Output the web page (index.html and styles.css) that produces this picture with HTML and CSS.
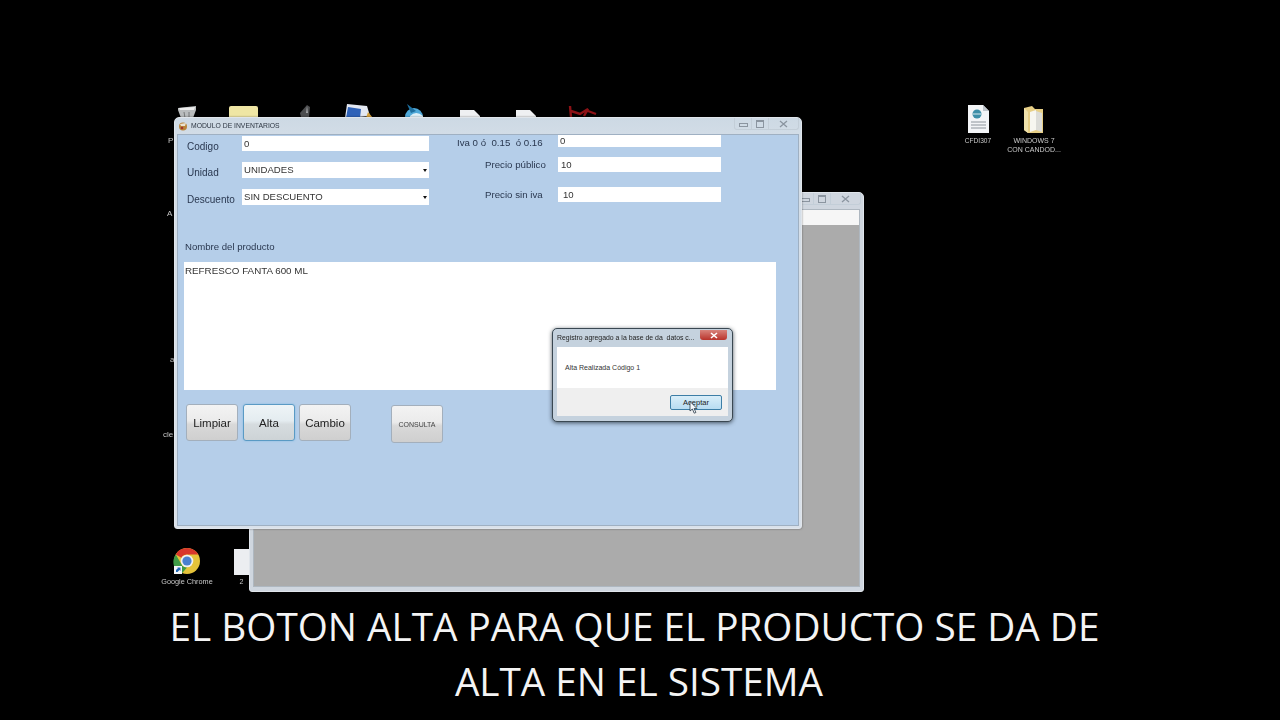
FILE: index.html
```html
<!DOCTYPE html>
<html lang="es">
<head>
    <meta charset="UTF-8">
    <meta name="viewport" content="width=device-width, initial-scale=1.0">
    <title>Modulo de inventarios</title>
    <link rel="stylesheet" href="styles.css">
</head>
<body>
    <div class="desktop">
        <!-- iconos del escritorio, casi todos tapados por las ventanas -->
        <svg class="peek peek-bin" viewBox="0 0 22 13"><path d="M2 3 L20 1 L20 5 L17 13 L5 13 L2 5 Z" fill="#b9bcbd"/><path d="M3 3 L19 2 L18 5 L4 5 Z" fill="#eceded"/><path d="M8 7 L9 13 M13 7 L13 13" stroke="#77797a"/></svg>
        <div class="peek peek-note"></div>
        <svg class="peek peek-dark" viewBox="0 0 14 12"><path d="M9 0 L12 2 L11 12 L3 12 L2 8 Z" fill="#4c4d4f"/><path d="M9 1 L10 8 L8 8 Z" fill="#a3a5a7"/></svg>
        <svg class="peek peek-book" viewBox="0 0 30 14"><path d="M4 0 L24 2 L27 12 L2 14 Z" fill="#e3e8f2"/><path d="M5 3 L18 5 L17 14 L3 14 Z" fill="#2f62b8"/><path d="M25 8 L30 14 L23 14 Z" fill="#d6a13c"/></svg>
        <svg class="peek peek-ball" viewBox="0 0 22 14"><circle cx="12" cy="13" r="9" fill="#4fa8d8"/><path d="M5 0 L14 7 L9 9 Z" fill="#1e6f9f"/><path d="M8 12 Q14 6 21 12 L21 14 L8 14 Z" fill="#dff0f8"/></svg>
        <svg class="peek peek-doc-a" viewBox="0 0 20 10"><path d="M0 2 L14 2 L20 8 L20 10 L0 10 Z" fill="#eff0f2"/></svg>
        <svg class="peek peek-doc-b" viewBox="0 0 20 10"><path d="M0 2 L14 2 L20 8 L20 10 L0 10 Z" fill="#eff0f2"/></svg>
        <svg class="peek peek-red" viewBox="0 0 30 14"><path d="M2 1 L3 12 M3 6 L12 9 L20 4 L16 11 M20 6 L28 9" stroke="#8d1115" stroke-width="2.4" fill="none"/></svg>

        <span class="cut-label label-p">P:</span>
        <span class="cut-label label-a">A</span>
        <span class="cut-label label-a2">a</span>
        <span class="cut-label label-cle">cle</span>

        <div class="icon icon-chrome">
            <svg class="icon-img" viewBox="0 0 28 28">
                <circle cx="14" cy="14" r="13" fill="#e5c33a"/>
                <path d="M14 1 A13 13 0 0 1 25.3 7.5 L14 7.5 A6.5 6.5 0 0 0 8.4 10.8 L2.8 7.4 A13 13 0 0 1 14 1 Z" fill="#d8372c"/>
                <path d="M2.8 7.4 L8.4 17.2 A6.5 6.5 0 0 0 14 20.5 L8.4 27 A13 13 0 0 1 2.8 7.4 Z" fill="#3f9b46"/>
                <circle cx="14" cy="14" r="6.3" fill="#f1f1f1"/>
                <circle cx="14" cy="14" r="4.6" fill="#4a80cf"/>
                <rect x="1" y="19" width="8" height="8" fill="#f4f6f8"/>
                <path d="M3 25 L3 23 L5 21 L4 20.5 L7.5 20.5 L7.5 24 L6.5 23 L4.5 25 Z" fill="#2168b5"/>
            </svg>
            <span class="icon-label">Google Chrome</span>
        </div>
        <div class="icon icon-two">
            <div class="blank-doc"></div>
            <span class="icon-label">2</span>
        </div>
        <div class="icon icon-cfdi">
            <svg class="icon-img" viewBox="0 0 22 28">
                <path d="M1 0 L16 0 L22 6 L22 28 L1 28 Z" fill="#f3f5f7"/>
                <path d="M16 0 L22 6 L16 6 Z" fill="#bfc6cc"/>
                <circle cx="10" cy="9" r="4.5" fill="#3d8fa8"/>
                <path d="M6 9 L14 9" stroke="#dcebf0"/>
                <path d="M4 17 H19 M4 20 H19 M4 23 H19" stroke="#8c949b"/>
            </svg>
            <span class="icon-label">CFDI307</span>
        </div>
        <div class="icon icon-folder">
            <svg class="icon-img" viewBox="0 0 22 28">
                <path d="M1 2 L9 0 L12 3 L20 3 L20 27 L5 27 L1 24 Z" fill="#e7cf86"/>
                <path d="M7 6 L13 4 L13 24 L7 26 Z" fill="#f7f6f0"/>
                <path d="M13 5 L19 7 L19 26 L13 24 Z" fill="#dcdcd8"/>
                <path d="M1 2 L5 6 L5 27 L1 24 Z" fill="#f0e2ab"/>
            </svg>
            <span class="icon-label">WINDOWS 7<br>CON CANDOD...</span>
        </div>

        <!-- ventana de atras -->
        <div class="win win-back">
            <div class="titlebar">
                <div class="controls">
                    <span class="ctl"><i class="ctl-min"></i></span>
                    <span class="ctl"><i class="ctl-max"></i></span>
                    <span class="ctl ctl-wide">
                        <svg class="ctl-x" viewBox="0 0 9 8"><path d="M1 1 L8 7 M8 1 L1 7" stroke="#8b95a0" stroke-width="1.3"/></svg>
                    </span>
                </div>
            </div>
            <div class="back-body">
                <div class="back-strip"></div>
                <div class="back-gray"></div>
            </div>
        </div>

        <!-- ventana principal -->
        <div class="win win-main">
            <div class="titlebar">
                <svg class="app-icon" viewBox="0 0 10 10"><circle cx="5" cy="5.5" r="4" fill="#b9853c"/><path d="M2 3 L8 2 L7 5 L3 5 Z" fill="#e9e3d2"/><circle cx="4" cy="7" r="1.3" fill="#a3342a"/></svg>
                <span class="win-title">MODULO DE INVENTARIOS</span>
                <div class="controls">
                    <span class="ctl"><i class="ctl-min"></i></span>
                    <span class="ctl"><i class="ctl-max"></i></span>
                    <span class="ctl ctl-wide">
                        <svg class="ctl-x" viewBox="0 0 9 8"><path d="M1 1 L8 7 M8 1 L1 7" stroke="#8b95a0" stroke-width="1.3"/></svg>
                    </span>
                </div>
            </div>
            <div class="main-body">
                <div class="form">
                    <div class="col-left">
                        <div class="row row-codigo">
                            <label class="lbl">Codigo</label>
                            <div class="field">0</div>
                        </div>
                        <div class="row">
                            <label class="lbl">Unidad</label>
                            <div class="field field-select">UNIDADES<i class="arrow"></i></div>
                        </div>
                        <div class="row">
                            <label class="lbl">Descuento</label>
                            <div class="field field-select">SIN DESCUENTO<i class="arrow"></i></div>
                        </div>
                    </div>
                    <div class="col-right">
                        <div class="price-row price-iva">
                            <label class="lbl-price">Iva 0 ó &nbsp;0.15 &nbsp;ó 0.16</label>
                            <div class="field field-iva">0</div>
                        </div>
                        <div class="price-row">
                            <label class="lbl-price lbl-indent">Precio público</label>
                            <div class="field field-price">10</div>
                        </div>
                        <div class="price-row">
                            <label class="lbl-price lbl-indent">Precio sin iva</label>
                            <div class="field field-price field-far">10</div>
                        </div>
                    </div>
                </div>
                <p class="nombre-lbl">Nombre del producto</p>
                <div class="nombre-box">REFRESCO FANTA 600 ML</div>
                <div class="buttons">
                    <button class="btn">Limpiar</button>
                    <button class="btn btn-focus">Alta</button>
                    <button class="btn btn-cambio">Cambio</button>
                    <button class="btn btn-small">CONSULTA</button>
                </div>
            </div>
        </div>

        <!-- mensaje -->
        <div class="dialog">
            <div class="dialog-title">
                <span class="dialog-text">Registro agregado a la base de da&nbsp; datos c...</span>
                <span class="dialog-close">
                    <svg class="dialog-x" viewBox="0 0 8 7"><path d="M1 1 L7 6 M7 1 L1 6" stroke="#fff" stroke-width="1.6"/></svg>
                </span>
            </div>
            <div class="dialog-msg">Alta Realizada Código 1</div>
            <div class="dialog-foot">
                <button class="dialog-btn">Aceptar</button>
            </div>
        </div>
        <svg class="cursor" viewBox="0 0 9 13"><path d="M1 0.5 L1 10 L3.4 8 L5.2 12.2 L6.9 11.5 L5.1 7.5 L8 7.5 Z" fill="#f4f8fb" stroke="#2b3a48" stroke-width=".8"/></svg>
    </div>

    <div class="caption">EL BOTON ALTA PARA QUE EL PRODUCTO SE DA DE<br><span class="caption-second">ALTA EN EL SISTEMA</span></div>
</body>
</html>
```

FILE: styles.css
```css
body {
    margin: 0;
    background-color: #000;
    font-family: "Liberation Sans", Arial, sans-serif;
    overflow: hidden;
}
.desktop {
    position: relative;
    width: 1280px;
    height: 599px;
    filter: blur(0.35px);
}
.caption {
    padding-right: 11px;
    font-family: "Open Sans", sans-serif;
    font-size: 38.7px;
    line-height: 54.5px;
    color: #f4f4f4;
    text-align: center;
}
.caption-second {
    padding-left: 9px;
}

/* iconos */
.peek {
    position: absolute;
}
.peek-bin { left: 176px; top: 105px; width: 22px; height: 13px; }
.peek-note { left: 229px; top: 106px; width: 29px; height: 12px; background-color: #efe6a4; border-radius: 2px 2px 0 0; }
.peek-dark { left: 298px; top: 105px; width: 14px; height: 12px; }
.peek-book { left: 343px; top: 104px; width: 30px; height: 14px; }
.peek-ball { left: 402px; top: 104px; width: 22px; height: 14px; }
.peek-doc-a { left: 460px; top: 108px; width: 20px; height: 10px; }
.peek-doc-b { left: 516px; top: 108px; width: 20px; height: 10px; }
.peek-red { left: 568px; top: 105px; width: 30px; height: 14px; }
.cut-label {
    position: absolute;
    font-size: 8px;
    line-height: 10px;
    color: #c4c4c4;
}
.label-p { left: 168px; top: 136px; }
.label-a { left: 167px; top: 209px; }
.label-a2 { left: 170px; top: 355px; }
.label-cle { left: 163px; top: 430px; }
.icon {
    position: absolute;
    display: flex;
    flex-direction: column;
    align-items: center;
    gap: 1px;
}
.icon-img {
    display: block;
}
.icon-label {
    font-size: 7px;
    line-height: 9px;
    color: #c9c9c9;
    text-align: center;
    white-space: nowrap;
}
.icon-chrome { left: 157px; top: 547px; width: 60px; gap: 2px; }
.icon-chrome .icon-img { width: 28px; height: 28px; }
.icon-chrome .icon-label { font-size: 7.3px; }
.icon-two { left: 234px; top: 549px; width: 15px; gap: 2px; }
.blank-doc { width: 15px; height: 26px; background-color: #eceef1; }
.icon-cfdi { left: 948px; top: 105px; width: 60px; gap: 3px; }
.icon-cfdi .icon-img { width: 22px; height: 28px; }
.icon-cfdi .icon-label { font-size: 6.6px; }
.icon-folder { left: 1004px; top: 106px; width: 60px; gap: 2px; }
.icon-folder .icon-img { width: 22px; height: 28px; }

/* ventanas */
.win {
    position: absolute;
    display: flex;
    flex-direction: column;
    box-sizing: border-box;
    background-color: #cfd6df;
    border: 1px solid #e0e5eb;
    border-radius: 5px 5px 3px 3px;
}
.win-back {
    left: 249px;
    top: 192px;
    width: 615px;
    height: 400px;
}
.win-main {
    left: 174px;
    top: 117px;
    width: 628px;
    height: 412px;
    background: linear-gradient(to bottom, #cdd9e4 0, #d3dde7 20px, #d9e1ea 100%);
    box-shadow: 0 0 2px rgba(0, 0, 0, 0.5);
}
.titlebar {
    display: flex;
    align-items: center;
    flex-shrink: 0;
    height: 16px;
    padding-left: 3px;
}
.app-icon {
    width: 10px;
    height: 10px;
    margin-right: 3px;
    margin-bottom: 1px;
}
.win-title {
    padding-bottom: 2px;
    font-size: 6.8px;
    color: #2b3440;
}
.controls {
    display: flex;
    height: 11px;
    margin-left: auto;
    margin-right: 2px;
    margin-top: -4px;
    border: 1px solid #c3ced8;
    border-top: none;
    border-radius: 0 0 3px 3px;
}
.ctl {
    display: flex;
    align-items: center;
    justify-content: center;
    width: 16px;
    border-right: 1px solid #c3ced8;
}
.ctl-wide {
    width: 29px;
    border-right: none;
}
.ctl-min {
    display: block;
    width: 7px;
    height: 2px;
    margin-top: 3px;
    border: 1px solid #8b95a0;
}
.ctl-max {
    display: block;
    width: 6px;
    height: 5px;
    border: 1px solid #8b95a0;
    border-top-width: 2px;
}
.ctl-x {
    width: 9px;
    height: 8px;
}
.back-body {
    display: flex;
    flex-direction: column;
    flex: 1;
    margin: 0 3px 4px;
    border: 1px solid #aeb7c0;
}
.back-strip {
    height: 15px;
    background-color: #f6f6f6;
}
.back-gray {
    flex: 1;
    background-color: #ababab;
}

/* formulario principal */
.main-body {
    flex: 1;
    box-sizing: border-box;
    margin: 1px 3px 3px;
    padding-left: 6px;
    overflow: hidden;
    background-color: #b5cee9;
    box-shadow: 0 0 0 1px #9fb0c2;
}
.form {
    display: flex;
    height: 70px;
}
.col-left {
    display: flex;
    flex-direction: column;
    gap: 11px;
    width: 245px;
    padding-left: 3px;
    padding-top: 1px;
}
.row {
    display: flex;
    height: 16px;
}
.row-codigo {
    height: 15px;
}
.lbl {
    width: 55px;
    flex-shrink: 0;
    padding-top: 4px;
    font-size: 10px;
    line-height: 14px;
    color: #2a3850;
}
.field {
    display: flex;
    align-items: center;
    box-sizing: border-box;
    width: 187px;
    height: 100%;
    padding-left: 2px;
    padding-bottom: 1px;
    background-color: #fff;
    font-size: 9.6px;
    color: #333;
}
.field-select {
    justify-content: space-between;
    padding-right: 2px;
    padding-bottom: 2px;
}
.arrow {
    width: 0;
    height: 0;
    border-left: 2.5px solid transparent;
    border-right: 2.5px solid transparent;
    border-top: 3px solid #111;
    margin-top: 3px;
}
.col-right {
    display: flex;
    flex-direction: column;
    margin-left: 25px;
}
.price-row {
    display: flex;
    flex-shrink: 0;
    height: 15px;
    margin-top: 15px;
    align-items: center;
}
.price-iva {
    height: 12px;
    margin-top: 0;
}
.price-iva + .price-row {
    margin-top: 10px;
}
.lbl-price {
    width: 101px;
    flex-shrink: 0;
    font-size: 9.7px;
    color: #2a3850;
    white-space: nowrap;
}
.price-iva .lbl-price {
    padding-top: 2px;
}
.lbl-indent {
    box-sizing: border-box;
    padding-left: 28px;
}
.field-iva {
    width: 163px;
}
.field-price {
    width: 163px;
    padding-left: 3px;
}
.field-far {
    padding-left: 5px;
}
.nombre-lbl {
    margin: 35px 0 8px 1px;
    font-size: 9.6px;
    line-height: 14px;
    color: #2a3850;
}
.nombre-box {
    box-sizing: border-box;
    width: 592px;
    height: 128px;
    padding: 2px 1px;
    background-color: #fff;
    font-size: 9.8px;
    line-height: 13px;
    color: #333;
}
.buttons {
    display: flex;
    align-items: flex-start;
    gap: 5px;
    margin: 14px 0 0 2px;
}
.btn {
    width: 52px;
    height: 37px;
    padding: 0;
    background: linear-gradient(to bottom, #f3f3f3 0, #ebebeb 45%, #d9d9d9 55%, #cfcfcf 100%);
    border: 1px solid #a3afbc;
    border-radius: 3px;
    font-family: "Liberation Sans", Arial, sans-serif;
    font-size: 11.5px;
    color: #222;
}
.btn-focus {
    border-color: #5a9ac4;
    background: linear-gradient(to bottom, #eef4f7 0, #e4ecf0 45%, #d6dcdf 55%, #cdd3d6 100%);
    box-shadow: 0 0 2px #7db7e0;
}
.btn-cambio {
    margin-left: -1px;
}
.btn-small {
    height: 38px;
    margin-top: 1px;
    margin-left: 35px;
    font-size: 7px;
    color: #444;
}

/* cuadro de mensaje */
.dialog {
    position: absolute;
    left: 552px;
    top: 328px;
    display: flex;
    flex-direction: column;
    box-sizing: border-box;
    width: 181px;
    height: 94px;
    padding: 0 4px 5px;
    background-color: #c5d2de;
    border: 1px solid #3a4852;
    border-radius: 5px;
    box-shadow: 0 1px 4px rgba(30, 40, 50, 0.75);
}
.dialog-title {
    display: flex;
    justify-content: space-between;
    flex-shrink: 0;
    height: 18px;
}
.dialog-text {
    padding-top: 5px;
    font-size: 6.9px;
    color: #222;
    white-space: nowrap;
}
.dialog-close {
    display: flex;
    align-items: center;
    justify-content: center;
    flex-shrink: 0;
    width: 27px;
    height: 10px;
    margin-top: 1px;
    margin-right: 1px;
    background: linear-gradient(to bottom, #d8837b, #b9332b);
    border-radius: 0 0 3px 3px;
}
.dialog-x {
    width: 8px;
    height: 7px;
}
.dialog-msg {
    flex-shrink: 0;
    box-sizing: border-box;
    height: 41px;
    padding: 16px 0 0 8px;
    background-color: #fff;
    font-size: 7px;
    line-height: 10px;
    color: #333;
}
.dialog-foot {
    display: flex;
    flex: 1;
    justify-content: flex-end;
    align-items: flex-start;
    padding: 7px 6px 0 0;
    background-color: #efefef;
}
.dialog-btn {
    width: 52px;
    height: 15px;
    padding: 0;
    background: linear-gradient(to bottom, #d9eef9, #b8dcf1);
    border: 1px solid #3d7ea6;
    border-radius: 2px;
    font-family: "Liberation Sans", Arial, sans-serif;
    font-size: 7.5px;
    color: #222;
}
.cursor {
    position: absolute;
    left: 689px;
    top: 401px;
    width: 9px;
    height: 13px;
}
```
